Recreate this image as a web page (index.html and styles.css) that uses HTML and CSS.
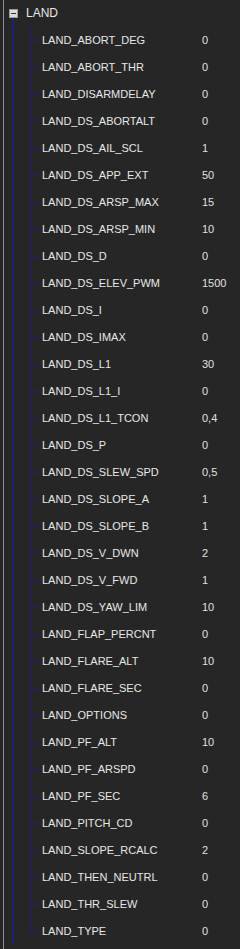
FILE: index.html
```html
<!DOCTYPE html>
<html lang="en">
<head>
    <meta charset="UTF-8">
    <meta name="viewport" content="width=device-width, initial-scale=1.0">
    <title>Parameters - LAND</title>
    <link rel="stylesheet" href="styles.css">
</head>
<body>
    <div class="panel">
        <div class="group">
            <div class="group-head">
                <span class="expander"></span>
                <span class="group-name">LAND</span>
            </div>
            <div class="children" id="children"></div>
        </div>
    </div>

    <script>
        const params = [
            ['LAND_ABORT_DEG', '0'],
            ['LAND_ABORT_THR', '0'],
            ['LAND_DISARMDELAY', '0'],
            ['LAND_DS_ABORTALT', '0'],
            ['LAND_DS_AIL_SCL', '1'],
            ['LAND_DS_APP_EXT', '50'],
            ['LAND_DS_ARSP_MAX', '15'],
            ['LAND_DS_ARSP_MIN', '10'],
            ['LAND_DS_D', '0'],
            ['LAND_DS_ELEV_PWM', '1500'],
            ['LAND_DS_I', '0'],
            ['LAND_DS_IMAX', '0'],
            ['LAND_DS_L1', '30'],
            ['LAND_DS_L1_I', '0'],
            ['LAND_DS_L1_TCON', '0,4'],
            ['LAND_DS_P', '0'],
            ['LAND_DS_SLEW_SPD', '0,5'],
            ['LAND_DS_SLOPE_A', '1'],
            ['LAND_DS_SLOPE_B', '1'],
            ['LAND_DS_V_DWN', '2'],
            ['LAND_DS_V_FWD', '1'],
            ['LAND_DS_YAW_LIM', '10'],
            ['LAND_FLAP_PERCNT', '0'],
            ['LAND_FLARE_ALT', '10'],
            ['LAND_FLARE_SEC', '0'],
            ['LAND_OPTIONS', '0'],
            ['LAND_PF_ALT', '10'],
            ['LAND_PF_ARSPD', '0'],
            ['LAND_PF_SEC', '6'],
            ['LAND_PITCH_CD', '0'],
            ['LAND_SLOPE_RCALC', '2'],
            ['LAND_THEN_NEUTRL', '0'],
            ['LAND_THR_SLEW', '0'],
            ['LAND_TYPE', '0']
        ];

        const list = document.getElementById('children');
        params.forEach(([name, value]) => {
            const row = document.createElement('div');
            row.className = 'param-row';
            row.innerHTML = '<span class="param-name">' + name + '</span>' +
                '<span class="param-value">' + value + '</span>';
            list.appendChild(row);
        });
    </script>
</body>
</html>
```

FILE: styles.css
```css
body {
    margin: 0;
    background: #262626;
    color: #e8e8e8;
    font-family: 'Liberation Sans', Arial, sans-serif;
    font-size: 11px;
}
.panel {
    margin-left: 3px;
    border-left: 1px solid #8e8e8e;
    min-height: 100vh;
}
.group {
    position: relative;
}
.group::before {
    content: '';
    position: absolute;
    left: 8px;
    top: 18px;
    bottom: 0;
    width: 2px;
    background: #1f1f78;
}
.group-head {
    height: 26px;
    display: flex;
    align-items: center;
    padding-left: 5px;
}
.expander {
    position: relative;
    width: 7px;
    height: 7px;
    border: 1px solid #9a9a9a;
    background: #dcdcdc;
    margin-right: 8px;
}
.expander::after {
    content: '';
    position: absolute;
    left: 1px;
    right: 1px;
    top: 3px;
    height: 1px;
    background: #333;
}
.group-name {
    font-size: 12px;
}
.param-row {
    position: relative;
    height: 27px;
    display: flex;
    align-items: center;
    padding-left: 38px;
}
.param-row::before {
    content: '';
    position: absolute;
    left: 26px;
    top: 0;
    height: 100%;
    border-left: 1px solid #1f1f78;
}
.param-row:last-child::before {
    height: 50%;
}
.param-row::after {
    content: '';
    position: absolute;
    left: 26px;
    top: 50%;
    width: 11px;
    border-top: 1px solid #1f1f78;
}
.param-name {
    width: 160px;
}
.param-value {
    color: #e0e0e0;
}
```
